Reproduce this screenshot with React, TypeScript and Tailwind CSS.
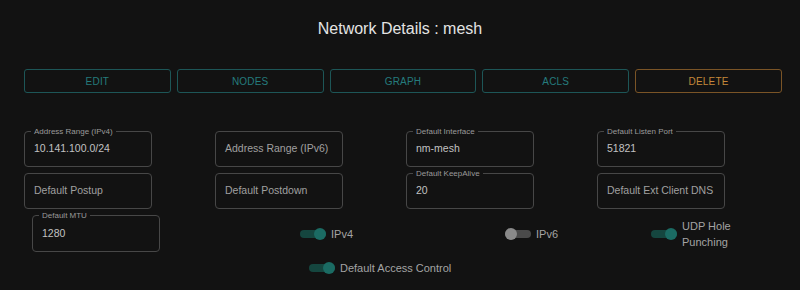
import React from 'react';

type FieldProps = {
  label?: string;
  value?: string;
  placeholder?: string;
  className?: string;
};

function Field({ label, value, placeholder, className = '' }: FieldProps) {
  return (
    <div
      className={`relative flex h-[36px] w-[128px] items-center rounded-[4px] border border-[#474747] px-[9px] ${className}`}
    >
      {label && (
        <span className="absolute left-[6px] top-[-5px] bg-[#121212] px-[3px] text-[8px] leading-[9px] text-[#9a9a9a]">
          {label}
        </span>
      )}
      {value ? (
        <span className="text-[10.5px] text-[#c2c2c2]">{value}</span>
      ) : (
        <span className="text-[10.5px] text-[#a0a0a0]">{placeholder}</span>
      )}
    </div>
  );
}

function Toggle({ on, label, wrap = false }: { on: boolean; label: string; wrap?: boolean }) {
  return (
    <div className="flex items-center gap-[5px]">
      <div className="relative h-[12px] w-[26px] shrink-0">
        <div
          className={`absolute left-0 right-0 top-[2px] h-[8px] rounded-full ${
            on ? 'bg-[#15463f]' : 'bg-[#4a4a4a]'
          }`}
        />
        <div
          className={`absolute top-0 h-[12px] w-[12px] rounded-full ${
            on ? 'right-0 bg-[#1b6b63]' : 'left-0 bg-[#8a8a8a]'
          }`}
        />
      </div>
      <span className={`text-[11px] leading-[16px] text-[#a4a4a4] ${wrap ? 'w-[60px]' : ''}`}>
        {label}
      </span>
    </div>
  );
}

const tabs = ['EDIT', 'NODES', 'GRAPH', 'ACLS'];

export default function App() {
  return (
    <div className="h-[290px] w-[800px] overflow-hidden bg-[#121212] font-['Liberation_Sans',Arial,sans-serif]">
      <h1 className="pt-[17px] text-center text-[16px] leading-[24px] text-[#e4e4e4]">
        Network Details : mesh
      </h1>

      <div className="ml-[24px] mt-[28px] flex w-[758px] gap-[6px]">
        {tabs.map((t) => (
          <button
            key={t}
            className="flex h-[24px] flex-1 items-center justify-center rounded-[3px] border border-[#1d5657] text-[10px] tracking-[0.02em] text-[#257b7d]"
          >
            {t}
          </button>
        ))}
        <button className="flex h-[24px] flex-1 items-center justify-center rounded-[3px] border border-[#7a5426] text-[10px] tracking-[0.02em] text-[#c4883a]">
          DELETE
        </button>
      </div>

      <div className="ml-[24px] mt-[38px] grid grid-cols-[191px_191px_191px_191px] gap-y-[6px]">
        <Field label="Address Range (IPv4)" value="10.141.100.0/24" />
        <Field placeholder="Address Range (IPv6)" />
        <Field label="Default Interface" value="nm-mesh" />
        <Field label="Default Listen Port" value="51821" />
        <Field placeholder="Default Postup" />
        <Field placeholder="Default Postdown" />
        <Field label="Default KeepAlive" value="20" />
        <Field placeholder="Default Ext Client DNS" />
      </div>

      <div className="ml-[24px] mt-[6px] grid grid-cols-[191px_191px_191px_191px] items-center">
        <div className="pl-[8px]">
          <Field label="Default MTU" value="1280" className="h-[37px]" />
        </div>
        <div className="pl-[85px]">
          <Toggle on label="IPv4" />
        </div>
        <div className="pl-[99px]">
          <Toggle on={false} label="IPv6" />
        </div>
        <div className="pl-[54px]">
          <Toggle on label="UDP Hole Punching" wrap />
        </div>
      </div>

      <div className="mt-[8px] pl-[309px]">
        <Toggle on label="Default Access Control" />
      </div>
    </div>
  );
}
